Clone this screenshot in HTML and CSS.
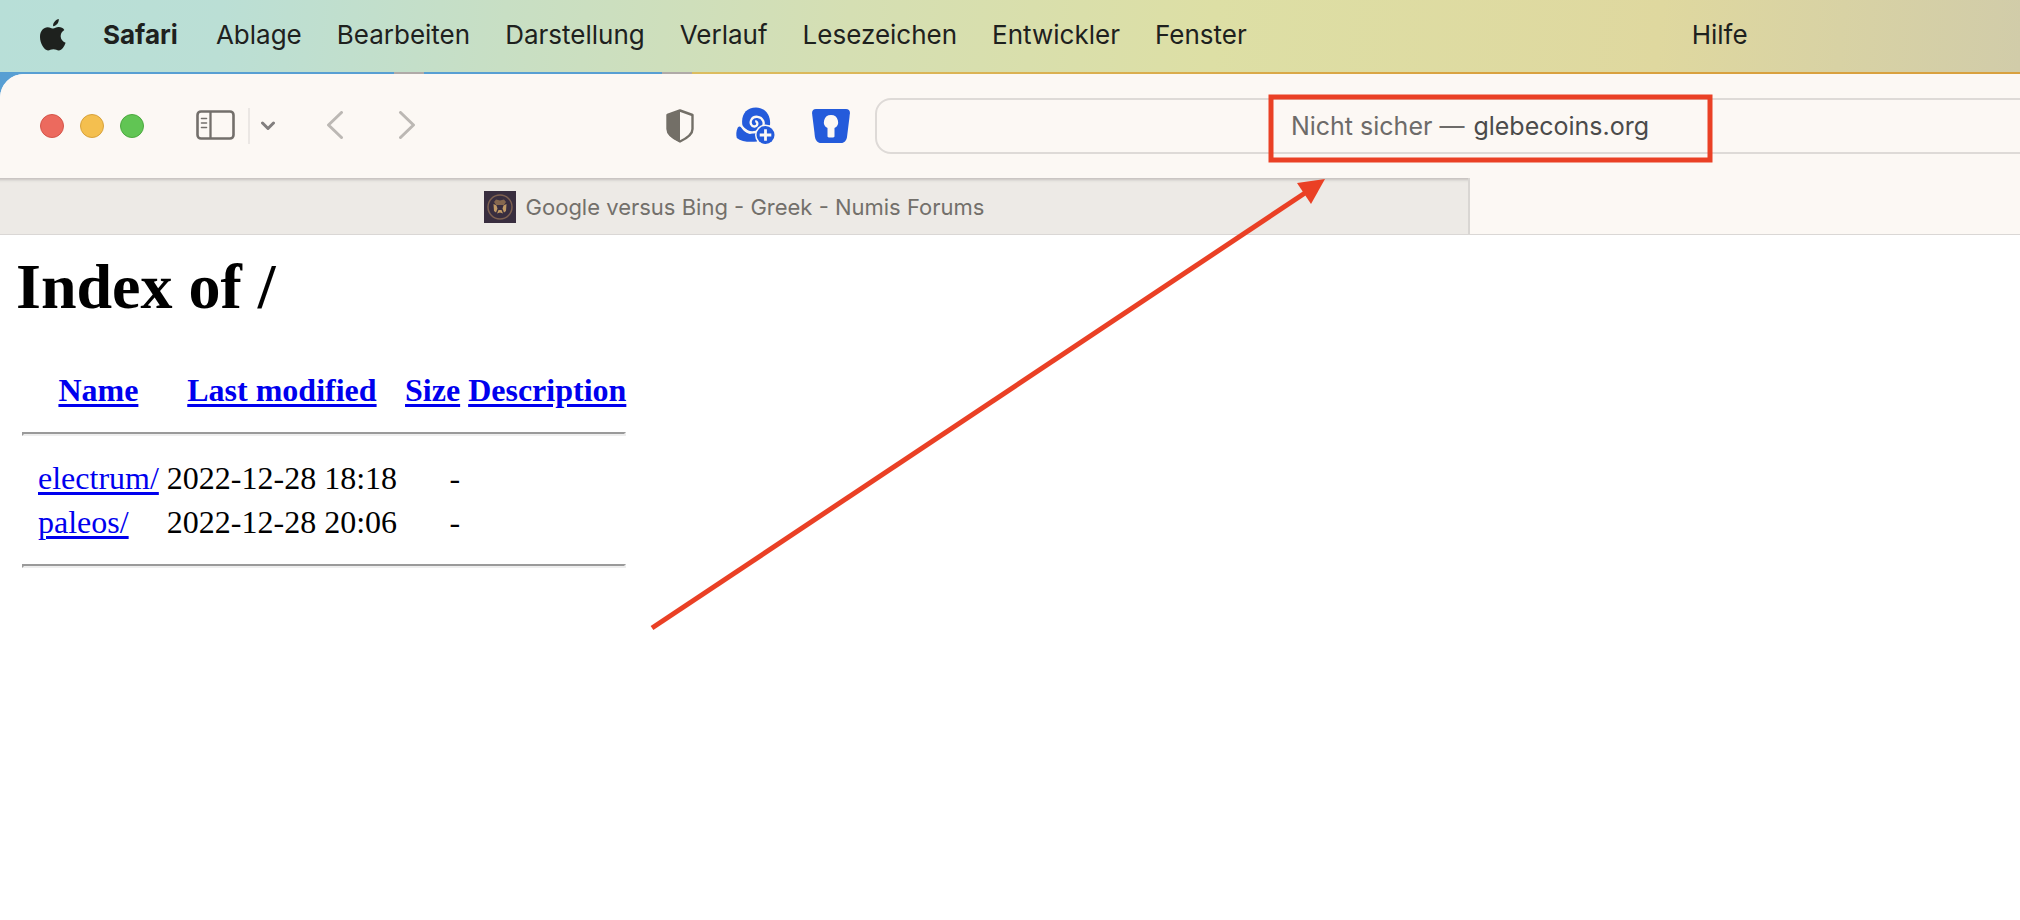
FILE: index.html
```html
<!DOCTYPE html>
<html lang="de">
<head>
    <meta charset="utf-8">
    <title>Index of /</title>
    <link rel="stylesheet" href="styles.css">
</head>
<body>
    <nav class="menubar">
        <a class="apple" href="#" aria-label="Apple">
            <svg width="26" height="32" viewBox="0 0 26 32"><path d="M18.800 0C19 3.900 16.200 7 13.100 7.200 12.800 3.500 16 .5 18.800 0zM13.300 9.600c1.200 0 3-1.500 5.400-1.500 2.300 0 4.400 1 5.600 2.800-5.500 3.300-4.500 10.600 1.300 12.800C24.400 27.300 21.800 31.300 18.800 31.400c-2 0-2.800-1.200-5.400-1.200S9.900 31.400 8 31.400C4.200 31.400 0 24.300 0 18 0 11.700 3.700 8.200 7.600 8.200c2.500 0 4.200 1.400 5.700 1.400z"/></svg>
        </a>
        <a class="app" href="#">Safari</a>
        <a href="#">Ablage</a>
        <a href="#">Bearbeiten</a>
        <a href="#">Darstellung</a>
        <a href="#">Verlauf</a>
        <a href="#">Lesezeichen</a>
        <a href="#">Entwickler</a>
        <a href="#">Fenster</a>
        <a class="help" href="#">Hilfe</a>
    </nav>

    <div class="desktop">
        <div class="window">
            <header class="toolbar">
                <div class="lights">
                    <button class="light red" aria-label="Schließen"></button>
                    <button class="light yellow" aria-label="Minimieren"></button>
                    <button class="light green" aria-label="Vollbild"></button>
                </div>
                <div class="sidebar-group">
                    <button aria-label="Seitenleiste">
                        <svg width="40" height="32" viewBox="0 0 40 32" fill="none" stroke="#736f6b"><rect x="1.500" y="1.500" width="36" height="27" rx="3.500" stroke-width="2.600"/><path d="M14.500 1v28" stroke-width="2.300"/><path d="M5.500 8.500h5M5.500 13h5M5.500 17.500h5" stroke-width="1.600" stroke-linecap="round"/></svg>
                    </button>
                    <button class="more" aria-label="Tabgruppen">
                        <svg width="16" height="10" viewBox="0 0 16 10" fill="none" stroke="#827e7e" stroke-width="3" stroke-linecap="round" stroke-linejoin="round"><path d="M2.500 2l5.500 5.500L13.500 2"/></svg>
                    </button>
                </div>
                <div class="history">
                    <button aria-label="Zurück">
                        <svg width="18" height="30" viewBox="0 0 18 30"><path d="M15.500 1.500L2.500 14l13 12.500"/></svg>
                    </button>
                    <button aria-label="Vorwärts">
                        <svg width="18" height="30" viewBox="0 0 18 30"><path d="M2.500 1.500L15.500 14l-13 12.500"/></svg>
                    </button>
                </div>
                <div class="extensions">
                    <button class="shield" aria-label="Datenschutzbericht">
                        <svg width="28" height="34" viewBox="0 0 28 34"><path d="M14 1.500L26.500 6v14c0 5-5 9-12.500 12.500C6.500 29 1.500 25 1.500 20V6z" fill="none" stroke="#736f67" stroke-width="2.400" stroke-linejoin="round"/><path d="M14 1L1 5.500V20c0 5.500 5 9.500 13 13z" fill="#736f67"/></svg>
                    </button>
                    <button aria-label="Erweiterung hinzufügen">
                        <svg width="40" height="38" viewBox="0 0 40 38"><path d="M6.500 19C4.500 8 10 .5 20 .5 29 .5 35 8 34 18L28 25 14 26z" fill="#245bdb"/><path d="M1.800 20.500C0 24 0 28 .8 31 5 34.500 13 35.500 21 34.500L25 23 14 27C9 26 7 22.500 6 20.500 5 19.200 2.700 19.200 1.800 20.500z" fill="#245bdb"/><path d="M5 18.500C8 24 14 26.500 20 24.800c5.500-1.500 9-6.300 7.200-10.800-2-4.800-9-5.800-11.700-1.500-2 3.300-.2 7.200 3 7 3.500-.3 3.800-5 .7-5.300" fill="none" stroke="#fcf8f4" stroke-width="2.300"/><circle cx="29.500" cy="28" r="10.500" fill="#fcf8f4"/><circle cx="29.500" cy="28" r="9" fill="#245bdb"/><path d="M29.500 22.200v11.600M23.700 28h11.600" stroke="#fcf8f4" stroke-width="2.800"/></svg>
                    </button>
                    <button aria-label="Passwortmanager">
                        <svg width="38" height="34" viewBox="0 0 38 34"><path d="M4 0h30c2.700 0 4.200 1.800 3.900 4.500l-2.800 23C34.500 31.600 32.500 34 29 34H9c-3.500 0-5.500-2.400-6.100-6.500L.1 4.500C-.2 1.800 1.300 0 4 0z" fill="#245bdb"/><path d="M19 6a7 7 0 0 1 3.500 13.100V27c0 1-.4 1.400-1.400 1.400h-4.200c-1 0-1.400-.4-1.400-1.400v-7.900A7 7 0 0 1 19 6z" fill="#fcf8f4"/></svg>
                    </button>
                </div>
                <button class="address"><span>Nicht sicher —</span> glebecoins.org</button>
            </header>

            <div class="tabs">
                <a class="tab" href="#">
                    <svg width="32" height="32" viewBox="0 0 32 32"><path d="M0 0h32v32H0z" fill="#392e3f"/><circle cx="16" cy="16" r="12" fill="none" stroke="#7d6050" stroke-width="1.500"/><path d="M10 11l2-2.500 4 1 4-1 2 2.500-2 3h-8z" fill="#86684f"/><path d="M9.500 13l3 1.500 1 3-1.500 4-2-1.500zM22.500 13l-3 1.500-1 3 1.500 4 2-1.500zM13 22.500l1.500-3.500h3l1.500 3.500-3-1z" fill="#c19a66"/></svg>
                    Google versus Bing - Greek - Numis Forums
                </a>
                <div class="tab-current"></div>
            </div>

            <main class="page">
                <h1>Index of /</h1>
                <table>
                    <tr><th>&nbsp;</th><th><a href="#">Name</a></th><th><a href="#">Last modified</a></th><th><a href="#">Size</a></th><th><a href="#">Description</a></th></tr>
                    <tr><th colspan="5"><hr></th></tr>
                    <tr><td></td><td><a href="#">electrum/</a></td><td class="num">2022-12-28 18:18</td><td class="num">-</td><td></td></tr>
                    <tr><td></td><td><a href="#">paleos/</a></td><td class="num">2022-12-28 20:06</td><td class="num">-</td><td></td></tr>
                    <tr><th colspan="5"><hr></th></tr>
                </table>
            </main>
        </div>
    </div>

    <!-- red marker box and arrow on top of the window -->
    <svg class="marker" width="1720" height="640" viewBox="0 0 1720 640">
        <rect x="1271" y="97" width="439" height="63" fill="none" stroke="#ea4025" stroke-width="5"/>
        <path d="M652 628L1308 191" stroke="#ea4025" stroke-width="5"/>
        <path d="M1325 179l-28 4 14 21z" fill="#ea4025"/>
    </svg>
</body>
</html>
```

FILE: styles.css
```css
* { box-sizing: border-box; }
body { margin: 0; background: white; overflow-x: hidden; font-family: Inter, "Liberation Sans", sans-serif; }
button { padding: 0; border: none; background: none; font: inherit; display: flex; align-items: center; justify-content: center; }
svg { display: block; flex: none; }

.menubar { display: flex; align-items: center; gap: 35px; height: 72px; padding: 0 40px 3px; background: linear-gradient(95deg, #b8dfd8 0%, #bbdfd5 11%, #c8dfc4 25%, #d5dfb3 42%, #dddfa5 60%, #dfd89f 82%, #d1cca9 100%); font-size: 26px; }
.menubar a { color: #1e211e; text-decoration: none; }
.menubar .app { margin: 0 3px 0 2px; font-weight: 700; }
.menubar .help { margin-left: 410px; }
.apple svg { fill: #1e211e; }

.desktop { padding-top: 2px; background: linear-gradient(90deg, #589fd3 0 394px, #b0aaa8 394px 424px, #589fd3 424px 662px, #b0aaa8 662px 692px, #dcbd60 692px, #d9a13f 75%) top / 100% 30px no-repeat; }
.window { background: white; border-top-left-radius: 24px; overflow: hidden; }

.toolbar { display: flex; align-items: center; height: 104px; padding-left: 40px; background: #fcf8f4; }
.lights { display: flex; gap: 16px; }
.light { width: 24px; height: 24px; border-radius: 50%; }
.red { background: #ec6a5e; border: 1px solid #d5554a; }
.yellow { background: #f4bf4f; border: 1px solid #d8a23c; }
.green { background: #61c554; border: 1px solid #4ca93f; }
.sidebar-group { display: flex; align-items: center; margin-left: 52px; gap: 12px; }
.more { height: 36px; width: 28px; border-left: 2px solid #ebe7e4; }
.more svg { margin-left: 10px; }
.history { display: flex; gap: 54px; margin-left: 50px; }
.history path { fill: none; stroke: #bcb8b4; stroke-width: 3; stroke-linecap: round; stroke-linejoin: round; }
.extensions { display: flex; align-items: center; gap: 36px; margin-left: 244px; }
.shield { width: 40px; }
.address { flex: 1; height: 56px; margin: 0 -45px 0 25px; border: 2px solid #dedad7; border-radius: 16px; color: #4b4b4b; font-size: 25px; gap: 9px; }
.address span { color: #6d6b69; }

.tabs { display: flex; height: 57px; background: #fcf8f4; border-bottom: 1px solid #dad7d5; }
.tab { display: flex; align-items: center; justify-content: center; gap: 10px; width: 1470px; padding-top: 2px; border-right: 2px solid #d9d6d3; background: #edeae6; box-shadow: inset 0 5px 3px -3px #c4c0bd; color: #73706b; font-size: 22px; text-decoration: none; }
.tab-current { flex: 1; }

.page { padding: 16px; font-family: "Liberation Serif", serif; font-size: 32px; }
.page h1 { margin: 0 0 43px; font-size: 64px; line-height: 72px; }
.page table { border-spacing: 4px; color: black; }
.page th, .page td { padding: 2px; line-height: 36px; }
.page a { color: #0000ee; text-underline-offset: 3px; }
.page hr { margin: 16px 0; border: 2px solid #eee; border-top-color: #9a9a9a; border-left-color: #9a9a9a; }
.num { text-align: right; }

.marker { position: absolute; top: 0; left: 0; pointer-events: none; }
```
